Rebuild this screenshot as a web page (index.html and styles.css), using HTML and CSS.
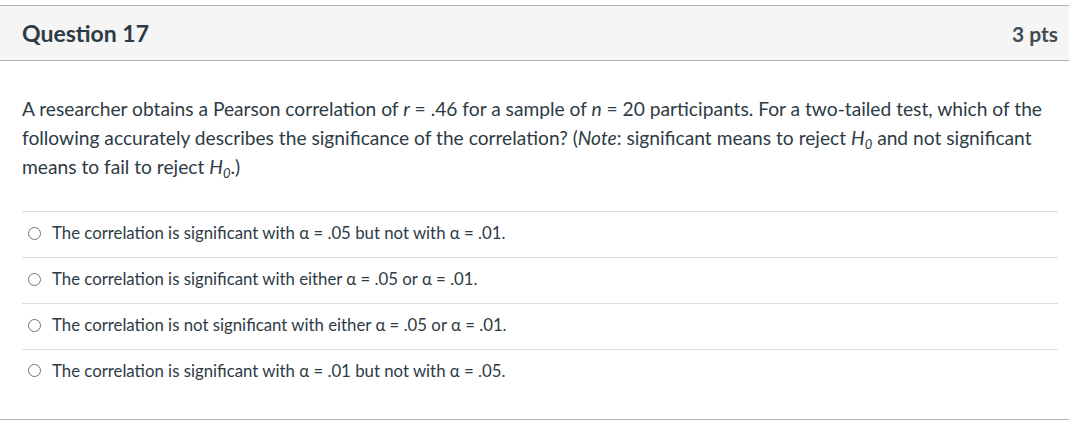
FILE: index.html
```html
<!DOCTYPE html>
<html>
<head>
<meta charset="utf-8">
<link rel="stylesheet" href="styles.css">
</head>
<body>
<div class="question">
  <div class="header">
    <span class="title">Question 17</span>
    <span class="pts">3 pts</span>
  </div>
  <div class="content">
    <div class="text">A researcher obtains a Pearson correlation of <i>r</i> = .46 for a sample of <i>n</i> = 20 participants. For a two-tailed test, which of the following accurately describes the significance of the correlation? (<i>Note</i>: significant means to reject <i>H</i><sub><i>0</i></sub> and not significant means to fail to reject <i>H</i><sub><i>0</i></sub>.)</div>
    <div class="answers">
      <div class="answer"><span class="radio"></span><span>The correlation is significant with α = .05 but not with α = .01.</span></div>
      <div class="answer"><span class="radio"></span><span>The correlation is significant with either α = .05 or α = .01.</span></div>
      <div class="answer"><span class="radio"></span><span>The correlation is not significant with either α = .05 or α = .01.</span></div>
      <div class="answer"><span class="radio"></span><span>The correlation is significant with α = .01 but not with α = .05.</span></div>
    </div>
  </div>
</div>
</body>
</html>
```
FILE: styles.css
```css
html, body {
  margin: 0;
  padding: 0;
  background: #fff;
}
body {
  font-family: Lato, "Open Sans", sans-serif;
  color: #2d3b45;
}
.question {
  margin-top: 5px;
  border-top: 1px solid #b5b5b5;
  border-bottom: 1px solid #b5b5b5;
}
.header {
  display: flex;
  justify-content: space-between;
  align-items: center;
  height: 54px;
  padding: 0 11px 0 22px;
  background: #f5f5f5;
  border-bottom: 1px solid #b5b5b5;
}
.title {
  font-weight: 700;
  font-size: 23px;
  color: #2d3b45;
}
.pts {
  font-weight: 700;
  font-size: 21px;
  color: #404c54;
}
.content {
  padding: 33px 11px 25px 22px;
}
.text {
  font-size: 19.2px;
  line-height: 29px;
}
.text sub {
  font-size: 13px;
  vertical-align: -4px;
  line-height: 0;
}
.answers {
  margin-top: 30px;
}
.answer {
  display: flex;
  align-items: center;
  gap: 11px;
  height: 41px;
  padding: 0 0 4px 6px;
  border-top: 1px solid #dcdfe1;
  font-size: 16.8px;
  color: #2d3b45;
}
.answer:last-child {
  height: 40px;
}
.radio {
  width: 11px;
  height: 11px;
  border: 1.2px solid #6b7780;
  border-radius: 50%;
  flex: none;
  margin-top: 1px;
}
```
